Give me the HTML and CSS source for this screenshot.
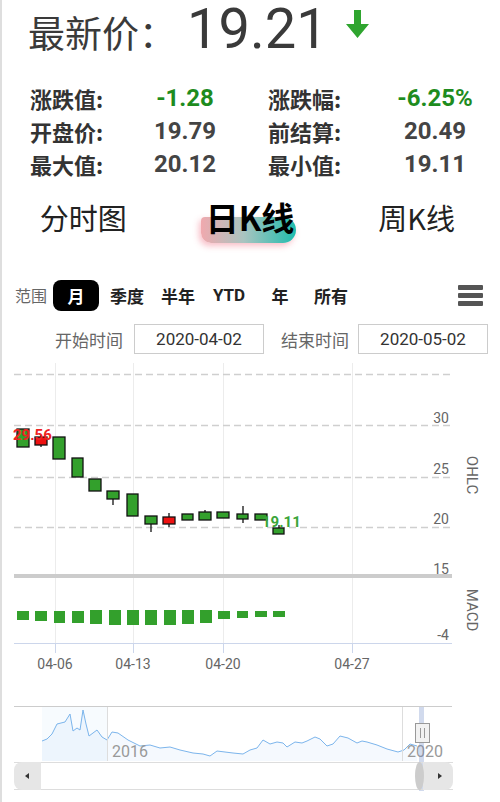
FILE: index.html
```html
<!DOCTYPE html>
<html lang="zh">
<head>
<meta charset="utf-8">
<link rel="stylesheet" href="styles.css">
</head>
<body>
<div class="page">
  <div class="header">
    <span class="hlabel">最新价：</span>
    <span class="hprice">19.21</span>
    <svg class="harrow" width="25" height="28" viewBox="0 0 25 28"><path d="M9 0h7v14h8L12.5 28 1 14h8z" fill="#2fa52f"/></svg>
  </div>

  <div class="stats">
    <div class="lab">涨跌值:</div><div class="val green">-1.28</div>
    <div class="lab">涨跌幅:</div><div class="val2 green">-6.25%</div>
    <div class="lab">开盘价:</div><div class="val">19.79</div>
    <div class="lab">前结算:</div><div class="val2">20.49</div>
    <div class="lab">最大值:</div><div class="val">20.12</div>
    <div class="lab">最小值:</div><div class="val2">19.11</div>
  </div>

  <div class="tabs">
    <div class="tab">分时图</div>
    <div class="tab"><span class="tab-active">日K线</span></div>
    <div class="tab">周K线</div>
  </div>

  <div class="range">
    <span class="range-label">范围</span>
    <span class="rbtn rbtn-on">月</span>
    <span class="rbtn">季度</span>
    <span class="rbtn">半年</span>
    <span class="rbtn">YTD</span>
    <span class="rbtn">年</span>
    <span class="rbtn">所有</span>
    <span class="menu"><i></i><i></i><i></i></span>
  </div>

  <div class="dates">
    <span class="dlabel">开始时间</span>
    <span class="dinput">2020-04-02</span>
    <span class="dlabel dlabel2">结束时间</span>
    <span class="dinput">2020-05-02</span>
  </div>

  <svg class="chart" width="500" height="442" viewBox="0 360 500 442">
    <!-- vertical grid -->
    <g stroke="#ececec" stroke-width="1">
      <line x1="55.5" y1="362" x2="55.5" y2="642"/>
      <line x1="133.5" y1="362" x2="133.5" y2="642"/>
      <line x1="223.5" y1="362" x2="223.5" y2="642"/>
      <line x1="352.5" y1="362" x2="352.5" y2="642"/>
    </g>
    <!-- horizontal dashed grid -->
    <g stroke="#cfcfcf" stroke-width="1.3" stroke-dasharray="7 4">
      <line x1="14" y1="373.5" x2="452" y2="373.5"/>
      <line x1="14" y1="424.5" x2="452" y2="424.5"/>
      <line x1="14" y1="476.5" x2="452" y2="476.5"/>
      <line x1="14" y1="526.5" x2="452" y2="526.5"/>
    </g>
    <g font-family="Roboto, sans-serif" font-size="14" fill="#666" text-anchor="end">
      <text x="449" y="422">30</text>
      <text x="449" y="473">25</text>
      <text x="449" y="523">20</text>
      <text x="449" y="573">15</text>
      <text x="449" y="639">-4</text>
    </g>
    <text class="axis-title" transform="translate(467,474) rotate(90)" text-anchor="middle">OHLC</text>
    <text class="axis-title" transform="translate(467,609) rotate(90)" text-anchor="middle">MACD</text>

    <!-- candles -->
    <g stroke="#111" stroke-width="1.3">
      <line x1="41" y1="434" x2="41" y2="446"/>
      <line x1="113" y1="490" x2="113" y2="504"/>
      <line x1="151" y1="515" x2="151" y2="531"/>
      <line x1="169" y1="512" x2="169" y2="526"/>
      <line x1="205" y1="509" x2="205" y2="519"/>
      <line x1="243" y1="505" x2="243" y2="522"/>
      <line x1="279" y1="524" x2="279" y2="533"/>
    </g>
    <g stroke="#111" stroke-width="1.3" fill="#33a02c">
      <rect x="17" y="428" width="12" height="18"/>
      <rect x="53" y="436" width="12" height="22"/>
      <rect x="72" y="457" width="11" height="19"/>
      <rect x="89" y="478" width="12" height="12"/>
      <rect x="107" y="490" width="12" height="8"/>
      <rect x="127" y="493" width="11" height="22"/>
      <rect x="145" y="515" width="12" height="8"/>
      <rect x="182" y="513" width="11" height="6"/>
      <rect x="199" y="511" width="12" height="8"/>
      <rect x="217" y="511" width="12" height="6"/>
      <rect x="237" y="513" width="11" height="5"/>
      <rect x="255" y="513" width="12" height="6"/>
      <rect x="273" y="527" width="11" height="6"/>
    </g>
    <g stroke="#111" stroke-width="1.3" fill="#ee1111">
      <rect x="35" y="436" width="12" height="8"/>
      <rect x="163" y="516" width="12" height="7"/>
    </g>
    <text x="13" y="439" class="lbl-red">29.56</text>
    <text x="262" y="526" class="lbl-green">19.11</text>

    <!-- separator -->
    <rect x="14" y="573" width="438" height="4" fill="#cccccc"/>

    <!-- MACD bars -->
    <g fill="#33a02c">
      <rect x="17" y="610" width="12" height="9"/>
      <rect x="35" y="610" width="12" height="10"/>
      <rect x="54" y="610" width="11" height="12"/>
      <rect x="72" y="610" width="12" height="12"/>
      <rect x="90" y="609" width="12" height="14"/>
      <rect x="109" y="609" width="12" height="15"/>
      <rect x="127" y="609" width="12" height="15"/>
      <rect x="145" y="609" width="12" height="15"/>
      <rect x="164" y="609" width="12" height="15"/>
      <rect x="182" y="609" width="12" height="14"/>
      <rect x="200" y="609" width="12" height="13"/>
      <rect x="218" y="610" width="12" height="8"/>
      <rect x="237" y="610" width="11" height="7"/>
      <rect x="255" y="610" width="12" height="6"/>
      <rect x="273" y="610" width="12" height="6"/>
    </g>

    <!-- x axis -->
    <line x1="14" y1="642.5" x2="452" y2="642.5" stroke="#ccd6eb"/>
    <g stroke="#ccd6eb">
      <line x1="55.5" y1="642" x2="55.5" y2="652"/>
      <line x1="133.5" y1="642" x2="133.5" y2="652"/>
      <line x1="223.5" y1="642" x2="223.5" y2="652"/>
      <line x1="352.5" y1="642" x2="352.5" y2="652"/>
    </g>
    <g font-family="Roboto, sans-serif" font-size="14" fill="#666" text-anchor="middle">
      <text x="55" y="668">04-06</text>
      <text x="133" y="668">04-13</text>
      <text x="223" y="668">04-20</text>
      <text x="352" y="668">04-27</text>
    </g>

    <!-- navigator -->
    <line x1="14" y1="705.5" x2="452" y2="705.5" stroke="#cccccc"/>
    <path d="M42 740 L47 738 L52 733 L57 723 L65 721 L70 713 L73 730 L77 727 L80 729 L83 709 L86 723 L89 735 L97 729 L102 736 L107 739 L112 731 L118 732 L128 739 L140 745 L150 744 L160 747 L170 746 L180 749 L193 752 L203 753 L210 755 L217 750 L225 751 L233 752 L243 753 L250 749 L257 747 L263 739 L270 743 L277 741 L283 742 L287 746 L295 741 L302 742 L307 740 L315 736 L320 738 L327 745 L333 743 L340 735 L348 737 L357 742 L362 740 L367 741 L377 744 L387 748 L398 751 L404 749 L410 743 L417 745 L417 760 L42 760 Z" fill="#7cb5ec" fill-opacity="0.08" stroke="none"/>
    <path d="M42 740 L47 738 L52 733 L57 723 L65 721 L70 713 L73 730 L77 727 L80 729 L83 709 L86 723 L89 735 L97 729 L102 736 L107 739 L112 731 L118 732 L128 739 L140 745 L150 744 L160 747 L170 746 L180 749 L193 752 L203 753 L210 755 L217 750 L225 751 L233 752 L243 753 L250 749 L257 747 L263 739 L270 743 L277 741 L283 742 L287 746 L295 741 L302 742 L307 740 L315 736 L320 738 L327 745 L333 743 L340 735 L348 737 L357 742 L362 740 L367 741 L377 744 L387 748 L398 751 L404 749 L410 743 L417 745" fill="none" stroke="#7cb5ec" stroke-width="1"/>
    <rect x="42" y="706" width="65" height="54" fill="#7cb5ec" fill-opacity="0.06"/>
    <g stroke="#dddddd">
      <line x1="107.5" y1="706" x2="107.5" y2="760"/>
      <line x1="402.5" y1="706" x2="402.5" y2="760"/>
    </g>
    <g font-family="Roboto, sans-serif" font-size="16" fill="#999">
      <text x="112" y="756">2016</text>
      <text x="407" y="756">2020</text>
    </g>
    <rect x="419" y="706" width="5" height="84" fill="#6685c2" fill-opacity="0.3"/>

    <!-- scrollbar -->
    <line x1="14" y1="761.5" x2="453" y2="761.5" stroke="#dddddd"/>
    <line x1="14" y1="788.5" x2="453" y2="788.5" stroke="#dddddd"/>
    <path d="M22 761 H41 V789 H22 A8 8 0 0 1 14 781 V769 A8 8 0 0 1 22 761 Z" fill="#e6e6e6"/>
    <path d="M29 772 L25 775 L29 778 Z" fill="#333"/>
    <path d="M423 761 H445 A8 8 0 0 1 453 769 V781 A8 8 0 0 1 445 789 H423 Z" fill="#e6e6e6"/>
    <path d="M438 772 L442 775 L438 778 Z" fill="#333"/>
    <ellipse cx="419.5" cy="775" rx="4.5" ry="14" fill="#cccccc"/>

    <!-- handle -->
    <rect x="415.5" y="722.5" width="14" height="19" fill="#f2f2f2" stroke="#999"/>
    <line x1="420.5" y1="727" x2="420.5" y2="737" stroke="#999"/>
    <line x1="424.5" y1="727" x2="424.5" y2="737" stroke="#999"/>
  </svg>
</div>
</body>
</html>
```

FILE: styles.css
```css
html, body {
  margin: 0;
  padding: 0;
  background: #fff;
}
.page {
  width: 498px;
  height: 802px;
  border-left: 2px solid #dedede;
  overflow: hidden;
  font-family: Roboto, "Noto Sans CJK SC", sans-serif;
  color: #333;
}
.header {
  display: flex;
  align-items: baseline;
  height: 62px;
  padding-left: 26px;
}
.hlabel {
  font-family: "Noto Sans CJK SC", sans-serif;
  font-size: 37px;
  line-height: 1;
  color: #3a3a3a;
}
.hprice {
  font-size: 56px;
  line-height: 1.06;
  color: #3a3a3a;
  margin-left: 11px;
}
.harrow {
  align-self: flex-start;
  margin-top: 10px;
  margin-left: 17px;
}
.stats {
  display: grid;
  grid-template-columns: 115px 123px 112px 110px;
  grid-auto-rows: 33px;
  align-items: center;
  padding-left: 28px;
  padding-top: 19px;
}
.lab {
  font-family: "Noto Sans CJK SC", sans-serif;
  font-size: 22px;
  font-weight: 700;
  color: #333;
}
.val, .val2 {
  font-size: 24px;
  font-weight: 700;
  color: #444;
  text-align: center;
}
.val {
  padding-right: 43px;
}
.green {
  color: #1e8c1e;
}
.tabs {
  display: grid;
  grid-template-columns: 1fr 1fr 1fr;
  height: 48px;
  align-items: center;
  margin-top: 13px;
  margin-left: -2px;
}
.tab {
  text-align: center;
  font-family: "Noto Sans CJK SC", sans-serif;
  font-size: 29px;
  color: #222;
}
.tab-active {
  position: relative;
  display: inline-block;
  font-size: 33px;
  font-weight: 700;
  color: #000;
  z-index: 0;
}
.tab-active::before {
  content: "";
  position: absolute;
  left: -5px;
  right: -2px;
  top: 50%;
  bottom: -2px;
  border-radius: 4px 13px 13px 10px;
  background: linear-gradient(90deg, #f0a9ae 0%, #a9c4c0 45%, #1fbcae 100%);
  box-shadow: -2px 3px 6px rgba(240, 110, 130, 0.45);
  z-index: -1;
}
.range {
  display: flex;
  align-items: center;
  height: 36px;
  margin-top: 36px;
  padding-left: 13px;
}
.range-label {
  font-family: "Noto Sans CJK SC", sans-serif;
  font-size: 16px;
  color: #666;
  margin-right: 6px;
}
.rbtn {
  width: 46px;
  height: 31px;
  display: flex;
  align-items: center;
  justify-content: center;
  font-family: Roboto, "Noto Sans CJK SC", sans-serif;
  font-size: 17px;
  font-weight: 700;
  color: #222;
  margin-right: 5px;
  border-radius: 8px;
}
.rbtn-on {
  background: #000;
  color: #fff;
}
.menu {
  margin-left: auto;
  margin-right: 17px;
  display: flex;
  flex-direction: column;
  gap: 3px;
}
.menu i {
  display: block;
  width: 25px;
  height: 5px;
  background: #555;
  border-radius: 1px;
}
.dates {
  display: flex;
  align-items: center;
  height: 32px;
  margin-top: 10px;
  padding-left: 53px;
}
.dlabel {
  font-family: "Noto Sans CJK SC", sans-serif;
  font-size: 17px;
  color: #666;
  margin-right: 11px;
}
.dlabel2 {
  margin-left: 17px;
  margin-right: 9px;
}
.dinput {
  width: 128px;
  height: 28px;
  border: 1px solid #cccccc;
  display: flex;
  align-items: center;
  justify-content: center;
  font-size: 17px;
  color: #333;
}
.chart {
  display: block;
  margin-top: 6px;
  margin-left: -2px;
}
.axis-title {
  font-family: Roboto, sans-serif;
  font-size: 15px;
  fill: #666;
}
.lbl-red {
  font-family: Roboto, sans-serif;
  font-size: 15px;
  font-weight: 700;
  fill: #ee2222;
}
.lbl-green {
  font-family: Roboto, sans-serif;
  font-size: 15px;
  font-weight: 700;
  fill: #3aa53a;
}
```
